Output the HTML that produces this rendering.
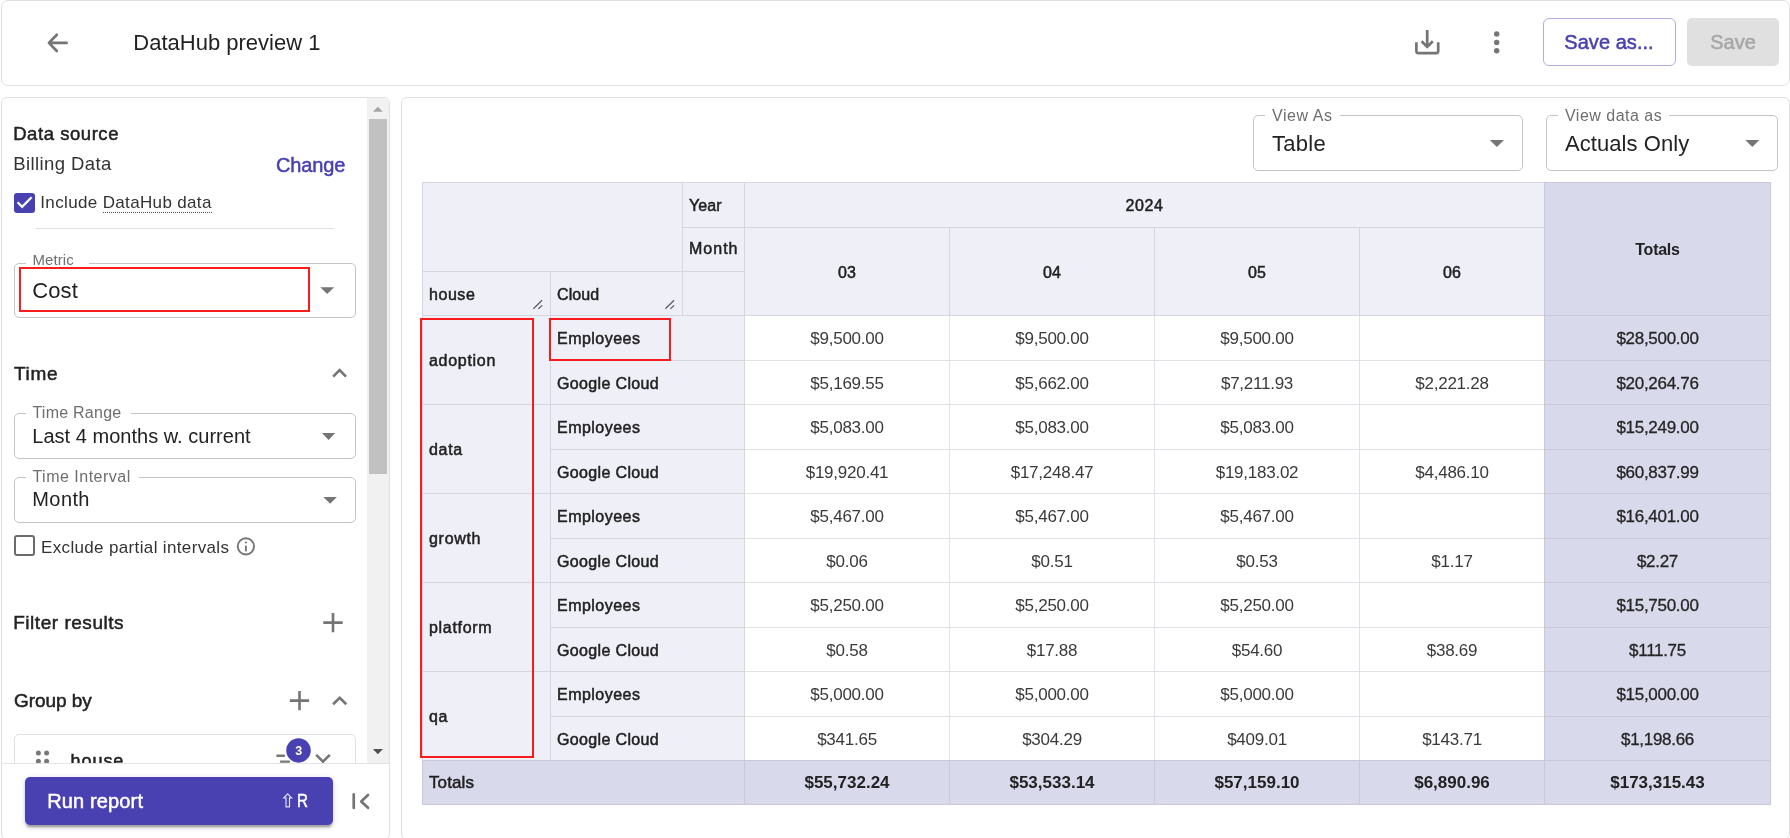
<!DOCTYPE html>
<html><head><meta charset="utf-8"><title>DataHub preview 1</title>
<style>
body{filter:grayscale(0.0001);}
html,body{margin:0;padding:0;background:#fff;width:1790px;height:838px;overflow:hidden;position:relative;font-family:"Liberation Sans",sans-serif;}
.t{position:absolute;white-space:nowrap;}
.r{position:absolute;}
.c{position:absolute;display:flex;align-items:center;white-space:nowrap;overflow:hidden;}
</style></head><body>
<div class="r" style="left:1px;top:0px;width:1789px;height:86px;border:1px solid #e0e0e0;border-radius:7px;box-sizing:border-box;"></div>
<div class="r" style="left:1px;top:97px;width:389px;height:743px;border:1px solid #e0e0e0;border-radius:6px;box-sizing:border-box;"></div>
<div class="r" style="left:401px;top:97px;width:1389px;height:743px;border:1px solid #e0e0e0;border-radius:6px;box-sizing:border-box;"></div>
<div class="t" style="left:133.3px;top:30.08px;font-size:22px;line-height:26px;color:#222;">DataHub preview 1</div>
<div class="r" style="left:1542.6px;top:18px;width:133.4px;height:48.4px;border:1.35px solid #b1addf;border-radius:6px;box-sizing:border-box;"></div>
<div class="t" style="left:1309px;width:600px;text-align:center;top:30.27px;font-size:20px;line-height:24px;color:#4940b2;-webkit-text-stroke:0.5px #4940b2;letter-spacing:0.05px;">Save as...</div>
<div class="r" style="left:1687px;top:18px;width:92px;height:48px;background:#e0e0e0;border-radius:5px;"></div>
<div class="t" style="left:1433px;width:600px;text-align:center;top:30.27px;font-size:20px;line-height:24px;color:#a6a6a6;-webkit-text-stroke:0.5px #a6a6a6;">Save</div>
<div class="t" style="left:13.2px;top:123.09px;font-size:18.5px;line-height:22px;color:#222;-webkit-text-stroke:0.5px #222;letter-spacing:0.55px;">Data source</div>
<div class="t" style="left:13.2px;top:153.09px;font-size:18.5px;line-height:22px;color:#333;letter-spacing:0.42px;">Billing Data</div>
<div class="t" style="left:10.5px;width:600px;text-align:center;top:153.27px;font-size:20px;line-height:24px;color:#4940b2;-webkit-text-stroke:0.5px #4940b2;letter-spacing:-0.14px;">Change</div>
<div class="r" style="left:14px;top:193px;width:21px;height:20px;background:#4940b2;border-radius:3px"></div>
<div class="t" style="left:40.3px;top:192.61px;font-size:17px;line-height:20px;color:#333;letter-spacing:0.35px;">Include <span style="border-bottom:1.5px dotted #555;padding-bottom:0px">DataHub data</span></div>
<div class="r" style="left:36px;top:228px;width:298px;height:1px;background:#e0e0e0"></div>
<div class="r" style="left:14px;top:263px;width:342px;height:55px;border:1px solid #c4c4c4;border-radius:5px;box-sizing:border-box;"></div>
<div class="r" style="left:26px;top:262px;width:63px;height:3px;background:#fff"></div>
<div class="t" style="left:32.4px;top:251.00px;font-size:15px;line-height:18px;color:#6e6e6e;letter-spacing:0.1px;">Metric</div>
<div class="t" style="left:32.3px;top:277.68px;font-size:22px;line-height:26px;color:#222;letter-spacing:0.1px;">Cost</div>
<div class="r" style="left:19px;top:267px;width:291px;height:45px;border:2px solid #f81c1c;box-sizing:border-box;"></div>
<div class="t" style="left:14px;top:362.02px;font-size:19px;line-height:23px;color:#222;-webkit-text-stroke:0.5px #222;letter-spacing:0.7px;">Time</div>
<div class="r" style="left:14px;top:413px;width:342px;height:46px;border:1px solid #c4c4c4;border-radius:5px;box-sizing:border-box;"></div>
<div class="r" style="left:26px;top:412px;width:105px;height:3px;background:#fff"></div>
<div class="t" style="left:32.4px;top:402.96px;font-size:16px;line-height:19px;color:#6e6e6e;letter-spacing:0.25px;">Time Range</div>
<div class="t" style="left:32.3px;top:423.67px;font-size:20px;line-height:24px;color:#222;letter-spacing:0.02px;">Last 4 months w. current</div>
<div class="r" style="left:14px;top:477px;width:342px;height:46px;border:1px solid #c4c4c4;border-radius:5px;box-sizing:border-box;"></div>
<div class="r" style="left:26px;top:476px;width:113px;height:3px;background:#fff"></div>
<div class="t" style="left:32.4px;top:466.66px;font-size:16px;line-height:19px;color:#6e6e6e;letter-spacing:0.5px;">Time Interval</div>
<div class="t" style="left:32.3px;top:487.07px;font-size:20px;line-height:24px;color:#222;letter-spacing:0.4px;">Month</div>
<div class="r" style="left:14px;top:535px;width:21px;height:21px;border:2px solid #6b6b6b;border-radius:3px;box-sizing:border-box;"></div>
<div class="t" style="left:41px;top:537.81px;font-size:17px;line-height:20px;color:#333;letter-spacing:0.35px;">Exclude partial intervals</div>
<div class="t" style="left:13.2px;top:610.92px;font-size:19px;line-height:23px;color:#222;-webkit-text-stroke:0.5px #222;letter-spacing:0.53px;">Filter results</div>
<div class="t" style="left:14px;top:689.42px;font-size:19px;line-height:23px;color:#222;-webkit-text-stroke:0.5px #222;letter-spacing:-0.07px;">Group by</div>
<div class="r" style="left:1px;top:98px;width:366px;height:665px;overflow:hidden">
<div class="r" style="left:13px;top:636px;width:342px;height:60px;border:1px solid #e0e0e0;border-radius:5px;box-sizing:border-box;"></div>
<div class="t" style="left:69.5px;top:651.76px;font-size:18px;line-height:22px;color:#222;-webkit-text-stroke:0.5px #222;letter-spacing:0.95px;">house</div>
</div>
<div class="r" style="left:367px;top:98px;width:22px;height:665px;background:#f1f1f1;border-top-right-radius:5px"></div>
<div class="r" style="left:369px;top:119px;width:18px;height:355px;background:#c1c1c1"></div>
<div class="r" style="left:2px;top:763px;width:387px;height:1px;background:#e3e3e3"></div>
<div class="r" style="left:25px;top:777px;width:308px;height:48px;background:#4940b2;border-radius:5px;box-shadow:0 4px 1.5px -2.7px rgba(0,0,0,.2),0 2.7px 2.7px 0 rgba(0,0,0,.14),0 1.35px 6.75px 0 rgba(0,0,0,.12)"></div>
<div class="t" style="left:47.2px;top:789.17px;font-size:20px;line-height:24px;color:#fff;-webkit-text-stroke:0.5px #fff;letter-spacing:0.14px;">Run report</div>
<div class="t" style="left:296.8px;top:789.22px;font-size:19px;line-height:23px;color:#fff;-webkit-text-stroke:0.5px #fff;transform:scaleX(0.8);transform-origin:0 0;">R</div>
<div class="r" style="left:1253px;top:115px;width:270px;height:56px;border:1px solid #c4c4c4;border-radius:5px;box-sizing:border-box;"></div>
<div class="r" style="left:1265px;top:113px;width:75px;height:4px;background:#fff"></div>
<div class="t" style="left:1272px;top:105.96px;font-size:16px;line-height:19px;color:#6e6e6e;letter-spacing:0.58px;">View As</div>
<div class="t" style="left:1272px;top:130.58px;font-size:22px;line-height:26px;color:#222;letter-spacing:0.3px;">Table</div>
<div class="r" style="left:1546px;top:115px;width:232px;height:56px;border:1px solid #c4c4c4;border-radius:5px;box-sizing:border-box;"></div>
<div class="r" style="left:1558px;top:113px;width:111px;height:4px;background:#fff"></div>
<div class="t" style="left:1565px;top:105.96px;font-size:16px;line-height:19px;color:#6e6e6e;letter-spacing:0.49px;">View data as</div>
<div class="t" style="left:1565px;top:130.58px;font-size:22px;line-height:26px;color:#222;letter-spacing:0.07px;">Actuals Only</div>
<div class="r" style="left:422px;top:182px;width:1349px;height:623px;background:#d6d6e0"></div>
<div class="r" style="left:745px;top:316px;width:799px;height:444px;background:#e1e1e7"></div>
<div class="r" style="left:1544px;top:182px;width:227px;height:623px;background:#c9c8dc"></div>
<div class="r" style="left:422px;top:760px;width:1349px;height:45px;background:#c9c8dc"></div>
<div class="c" style="left:423px;top:183px;width:259px;height:88px;background:#efeff8;justify-content:center;padding-top:2px;box-sizing:border-box;"><span style="font-size:17px;color:#333;"></span></div>
<div class="c" style="left:683px;top:183px;width:61px;height:44px;background:#efeff8;padding-left:6px;padding-top:2px;box-sizing:border-box;"><span style="font-size:16px;color:#222;-webkit-text-stroke:0.5px #222;letter-spacing:0.1px;">Year</span></div>
<div class="c" style="left:745px;top:183px;width:799px;height:44px;background:#efeff8;justify-content:center;padding-top:2px;box-sizing:border-box;"><span style="font-size:16px;color:#222;-webkit-text-stroke:0.5px #222;letter-spacing:0.6px;">2024</span></div>
<div class="c" style="left:1545px;top:183px;width:225px;height:132px;background:#d9d9ec;justify-content:center;padding-top:2px;box-sizing:border-box;"><span style="font-size:16px;color:#222;font-weight:700;letter-spacing:-0.25px;">Totals</span></div>
<div class="c" style="left:683px;top:228px;width:61px;height:43px;background:#efeff8;padding-left:6px;padding-top:2px;box-sizing:border-box;padding-top:0px;padding-bottom:2px;"><span style="font-size:16px;color:#222;-webkit-text-stroke:0.5px #222;letter-spacing:1.0px;">Month</span></div>
<div class="c" style="left:745px;top:228px;width:204px;height:87px;background:#efeff8;justify-content:center;padding-top:2px;box-sizing:border-box;"><span style="font-size:16px;color:#222;-webkit-text-stroke:0.5px #222;letter-spacing:0.1px;">03</span></div>
<div class="c" style="left:950px;top:228px;width:204px;height:87px;background:#efeff8;justify-content:center;padding-top:2px;box-sizing:border-box;"><span style="font-size:16px;color:#222;-webkit-text-stroke:0.5px #222;letter-spacing:0.1px;">04</span></div>
<div class="c" style="left:1155px;top:228px;width:204px;height:87px;background:#efeff8;justify-content:center;padding-top:2px;box-sizing:border-box;"><span style="font-size:16px;color:#222;-webkit-text-stroke:0.5px #222;letter-spacing:0.1px;">05</span></div>
<div class="c" style="left:1360px;top:228px;width:184px;height:87px;background:#efeff8;justify-content:center;padding-top:2px;box-sizing:border-box;"><span style="font-size:16px;color:#222;-webkit-text-stroke:0.5px #222;letter-spacing:0.1px;">06</span></div>
<div class="c" style="left:423px;top:272px;width:127px;height:43px;background:#efeff8;padding-left:6px;padding-top:2px;box-sizing:border-box;"><span style="font-size:16px;color:#222;-webkit-text-stroke:0.5px #222;letter-spacing:0.55px;">house</span></div>
<div class="c" style="left:551px;top:272px;width:131px;height:43px;background:#efeff8;padding-left:6px;padding-top:2px;box-sizing:border-box;"><span style="font-size:16px;color:#222;-webkit-text-stroke:0.5px #222;letter-spacing:0.1px;">Cloud</span></div>
<div class="c" style="left:683px;top:272px;width:61px;height:43px;background:#efeff8;justify-content:center;padding-top:2px;box-sizing:border-box;"><span style="font-size:17px;color:#333;"></span></div>
<div class="c" style="left:423px;top:316px;width:127px;height:88px;background:#efeff8;padding-left:6px;padding-top:2px;box-sizing:border-box;"><span style="font-size:16px;color:#222;-webkit-text-stroke:0.5px #222;letter-spacing:0.7px;">adoption</span></div>
<div class="c" style="left:423px;top:405px;width:127px;height:88px;background:#efeff8;padding-left:6px;padding-top:2px;box-sizing:border-box;"><span style="font-size:16px;color:#222;-webkit-text-stroke:0.5px #222;letter-spacing:0.7px;">data</span></div>
<div class="c" style="left:423px;top:494px;width:127px;height:88px;background:#efeff8;padding-left:6px;padding-top:2px;box-sizing:border-box;"><span style="font-size:16px;color:#222;-webkit-text-stroke:0.5px #222;letter-spacing:0.7px;">growth</span></div>
<div class="c" style="left:423px;top:583px;width:127px;height:88px;background:#efeff8;padding-left:6px;padding-top:2px;box-sizing:border-box;"><span style="font-size:16px;color:#222;-webkit-text-stroke:0.5px #222;letter-spacing:0.7px;">platform</span></div>
<div class="c" style="left:423px;top:672px;width:127px;height:88px;background:#efeff8;padding-left:6px;padding-top:2px;box-sizing:border-box;"><span style="font-size:16px;color:#222;-webkit-text-stroke:0.5px #222;letter-spacing:0.7px;">qa</span></div>
<div class="c" style="left:551px;top:316px;width:193px;height:44px;background:#efeff8;padding-left:6px;padding-top:2px;box-sizing:border-box;"><span style="font-size:16px;color:#222;-webkit-text-stroke:0.5px #222;letter-spacing:0.48px;">Employees</span></div>
<div class="c" style="left:745px;top:316px;width:204px;height:44px;background:#fff;justify-content:center;padding-top:2px;box-sizing:border-box;"><span style="font-size:17px;color:#3a3a3a;letter-spacing:-0.25px;">$9,500.00</span></div>
<div class="c" style="left:950px;top:316px;width:204px;height:44px;background:#fff;justify-content:center;padding-top:2px;box-sizing:border-box;"><span style="font-size:17px;color:#3a3a3a;letter-spacing:-0.25px;">$9,500.00</span></div>
<div class="c" style="left:1155px;top:316px;width:204px;height:44px;background:#fff;justify-content:center;padding-top:2px;box-sizing:border-box;"><span style="font-size:17px;color:#3a3a3a;letter-spacing:-0.25px;">$9,500.00</span></div>
<div class="c" style="left:1360px;top:316px;width:184px;height:44px;background:#fff;justify-content:center;padding-top:2px;box-sizing:border-box;"><span style="font-size:17px;color:#3a3a3a;letter-spacing:-0.25px;"></span></div>
<div class="c" style="left:1545px;top:316px;width:225px;height:44px;background:#d9d9ec;justify-content:center;padding-top:2px;box-sizing:border-box;"><span style="font-size:17px;color:#262626;-webkit-text-stroke:0.3px #262626;letter-spacing:-0.3px;">$28,500.00</span></div>
<div class="c" style="left:551px;top:361px;width:193px;height:43px;background:#efeff8;padding-left:6px;padding-top:2px;box-sizing:border-box;"><span style="font-size:16px;color:#222;-webkit-text-stroke:0.5px #222;letter-spacing:0.35px;">Google Cloud</span></div>
<div class="c" style="left:745px;top:361px;width:204px;height:43px;background:#fff;justify-content:center;padding-top:2px;box-sizing:border-box;"><span style="font-size:17px;color:#3a3a3a;letter-spacing:-0.25px;">$5,169.55</span></div>
<div class="c" style="left:950px;top:361px;width:204px;height:43px;background:#fff;justify-content:center;padding-top:2px;box-sizing:border-box;"><span style="font-size:17px;color:#3a3a3a;letter-spacing:-0.25px;">$5,662.00</span></div>
<div class="c" style="left:1155px;top:361px;width:204px;height:43px;background:#fff;justify-content:center;padding-top:2px;box-sizing:border-box;"><span style="font-size:17px;color:#3a3a3a;letter-spacing:-0.25px;">$7,211.93</span></div>
<div class="c" style="left:1360px;top:361px;width:184px;height:43px;background:#fff;justify-content:center;padding-top:2px;box-sizing:border-box;"><span style="font-size:17px;color:#3a3a3a;letter-spacing:-0.25px;">$2,221.28</span></div>
<div class="c" style="left:1545px;top:361px;width:225px;height:43px;background:#d9d9ec;justify-content:center;padding-top:2px;box-sizing:border-box;"><span style="font-size:17px;color:#262626;-webkit-text-stroke:0.3px #262626;letter-spacing:-0.3px;">$20,264.76</span></div>
<div class="c" style="left:551px;top:405px;width:193px;height:44px;background:#efeff8;padding-left:6px;padding-top:2px;box-sizing:border-box;"><span style="font-size:16px;color:#222;-webkit-text-stroke:0.5px #222;letter-spacing:0.48px;">Employees</span></div>
<div class="c" style="left:745px;top:405px;width:204px;height:44px;background:#fff;justify-content:center;padding-top:2px;box-sizing:border-box;"><span style="font-size:17px;color:#3a3a3a;letter-spacing:-0.25px;">$5,083.00</span></div>
<div class="c" style="left:950px;top:405px;width:204px;height:44px;background:#fff;justify-content:center;padding-top:2px;box-sizing:border-box;"><span style="font-size:17px;color:#3a3a3a;letter-spacing:-0.25px;">$5,083.00</span></div>
<div class="c" style="left:1155px;top:405px;width:204px;height:44px;background:#fff;justify-content:center;padding-top:2px;box-sizing:border-box;"><span style="font-size:17px;color:#3a3a3a;letter-spacing:-0.25px;">$5,083.00</span></div>
<div class="c" style="left:1360px;top:405px;width:184px;height:44px;background:#fff;justify-content:center;padding-top:2px;box-sizing:border-box;"><span style="font-size:17px;color:#3a3a3a;letter-spacing:-0.25px;"></span></div>
<div class="c" style="left:1545px;top:405px;width:225px;height:44px;background:#d9d9ec;justify-content:center;padding-top:2px;box-sizing:border-box;"><span style="font-size:17px;color:#262626;-webkit-text-stroke:0.3px #262626;letter-spacing:-0.3px;">$15,249.00</span></div>
<div class="c" style="left:551px;top:450px;width:193px;height:43px;background:#efeff8;padding-left:6px;padding-top:2px;box-sizing:border-box;"><span style="font-size:16px;color:#222;-webkit-text-stroke:0.5px #222;letter-spacing:0.35px;">Google Cloud</span></div>
<div class="c" style="left:745px;top:450px;width:204px;height:43px;background:#fff;justify-content:center;padding-top:2px;box-sizing:border-box;"><span style="font-size:17px;color:#3a3a3a;letter-spacing:-0.25px;">$19,920.41</span></div>
<div class="c" style="left:950px;top:450px;width:204px;height:43px;background:#fff;justify-content:center;padding-top:2px;box-sizing:border-box;"><span style="font-size:17px;color:#3a3a3a;letter-spacing:-0.25px;">$17,248.47</span></div>
<div class="c" style="left:1155px;top:450px;width:204px;height:43px;background:#fff;justify-content:center;padding-top:2px;box-sizing:border-box;"><span style="font-size:17px;color:#3a3a3a;letter-spacing:-0.25px;">$19,183.02</span></div>
<div class="c" style="left:1360px;top:450px;width:184px;height:43px;background:#fff;justify-content:center;padding-top:2px;box-sizing:border-box;"><span style="font-size:17px;color:#3a3a3a;letter-spacing:-0.25px;">$4,486.10</span></div>
<div class="c" style="left:1545px;top:450px;width:225px;height:43px;background:#d9d9ec;justify-content:center;padding-top:2px;box-sizing:border-box;"><span style="font-size:17px;color:#262626;-webkit-text-stroke:0.3px #262626;letter-spacing:-0.3px;">$60,837.99</span></div>
<div class="c" style="left:551px;top:494px;width:193px;height:44px;background:#efeff8;padding-left:6px;padding-top:2px;box-sizing:border-box;"><span style="font-size:16px;color:#222;-webkit-text-stroke:0.5px #222;letter-spacing:0.48px;">Employees</span></div>
<div class="c" style="left:745px;top:494px;width:204px;height:44px;background:#fff;justify-content:center;padding-top:2px;box-sizing:border-box;"><span style="font-size:17px;color:#3a3a3a;letter-spacing:-0.25px;">$5,467.00</span></div>
<div class="c" style="left:950px;top:494px;width:204px;height:44px;background:#fff;justify-content:center;padding-top:2px;box-sizing:border-box;"><span style="font-size:17px;color:#3a3a3a;letter-spacing:-0.25px;">$5,467.00</span></div>
<div class="c" style="left:1155px;top:494px;width:204px;height:44px;background:#fff;justify-content:center;padding-top:2px;box-sizing:border-box;"><span style="font-size:17px;color:#3a3a3a;letter-spacing:-0.25px;">$5,467.00</span></div>
<div class="c" style="left:1360px;top:494px;width:184px;height:44px;background:#fff;justify-content:center;padding-top:2px;box-sizing:border-box;"><span style="font-size:17px;color:#3a3a3a;letter-spacing:-0.25px;"></span></div>
<div class="c" style="left:1545px;top:494px;width:225px;height:44px;background:#d9d9ec;justify-content:center;padding-top:2px;box-sizing:border-box;"><span style="font-size:17px;color:#262626;-webkit-text-stroke:0.3px #262626;letter-spacing:-0.3px;">$16,401.00</span></div>
<div class="c" style="left:551px;top:539px;width:193px;height:43px;background:#efeff8;padding-left:6px;padding-top:2px;box-sizing:border-box;"><span style="font-size:16px;color:#222;-webkit-text-stroke:0.5px #222;letter-spacing:0.35px;">Google Cloud</span></div>
<div class="c" style="left:745px;top:539px;width:204px;height:43px;background:#fff;justify-content:center;padding-top:2px;box-sizing:border-box;"><span style="font-size:17px;color:#3a3a3a;letter-spacing:-0.25px;">$0.06</span></div>
<div class="c" style="left:950px;top:539px;width:204px;height:43px;background:#fff;justify-content:center;padding-top:2px;box-sizing:border-box;"><span style="font-size:17px;color:#3a3a3a;letter-spacing:-0.25px;">$0.51</span></div>
<div class="c" style="left:1155px;top:539px;width:204px;height:43px;background:#fff;justify-content:center;padding-top:2px;box-sizing:border-box;"><span style="font-size:17px;color:#3a3a3a;letter-spacing:-0.25px;">$0.53</span></div>
<div class="c" style="left:1360px;top:539px;width:184px;height:43px;background:#fff;justify-content:center;padding-top:2px;box-sizing:border-box;"><span style="font-size:17px;color:#3a3a3a;letter-spacing:-0.25px;">$1.17</span></div>
<div class="c" style="left:1545px;top:539px;width:225px;height:43px;background:#d9d9ec;justify-content:center;padding-top:2px;box-sizing:border-box;"><span style="font-size:17px;color:#262626;-webkit-text-stroke:0.3px #262626;letter-spacing:-0.3px;">$2.27</span></div>
<div class="c" style="left:551px;top:583px;width:193px;height:44px;background:#efeff8;padding-left:6px;padding-top:2px;box-sizing:border-box;"><span style="font-size:16px;color:#222;-webkit-text-stroke:0.5px #222;letter-spacing:0.48px;">Employees</span></div>
<div class="c" style="left:745px;top:583px;width:204px;height:44px;background:#fff;justify-content:center;padding-top:2px;box-sizing:border-box;"><span style="font-size:17px;color:#3a3a3a;letter-spacing:-0.25px;">$5,250.00</span></div>
<div class="c" style="left:950px;top:583px;width:204px;height:44px;background:#fff;justify-content:center;padding-top:2px;box-sizing:border-box;"><span style="font-size:17px;color:#3a3a3a;letter-spacing:-0.25px;">$5,250.00</span></div>
<div class="c" style="left:1155px;top:583px;width:204px;height:44px;background:#fff;justify-content:center;padding-top:2px;box-sizing:border-box;"><span style="font-size:17px;color:#3a3a3a;letter-spacing:-0.25px;">$5,250.00</span></div>
<div class="c" style="left:1360px;top:583px;width:184px;height:44px;background:#fff;justify-content:center;padding-top:2px;box-sizing:border-box;"><span style="font-size:17px;color:#3a3a3a;letter-spacing:-0.25px;"></span></div>
<div class="c" style="left:1545px;top:583px;width:225px;height:44px;background:#d9d9ec;justify-content:center;padding-top:2px;box-sizing:border-box;"><span style="font-size:17px;color:#262626;-webkit-text-stroke:0.3px #262626;letter-spacing:-0.3px;">$15,750.00</span></div>
<div class="c" style="left:551px;top:628px;width:193px;height:43px;background:#efeff8;padding-left:6px;padding-top:2px;box-sizing:border-box;"><span style="font-size:16px;color:#222;-webkit-text-stroke:0.5px #222;letter-spacing:0.35px;">Google Cloud</span></div>
<div class="c" style="left:745px;top:628px;width:204px;height:43px;background:#fff;justify-content:center;padding-top:2px;box-sizing:border-box;"><span style="font-size:17px;color:#3a3a3a;letter-spacing:-0.25px;">$0.58</span></div>
<div class="c" style="left:950px;top:628px;width:204px;height:43px;background:#fff;justify-content:center;padding-top:2px;box-sizing:border-box;"><span style="font-size:17px;color:#3a3a3a;letter-spacing:-0.25px;">$17.88</span></div>
<div class="c" style="left:1155px;top:628px;width:204px;height:43px;background:#fff;justify-content:center;padding-top:2px;box-sizing:border-box;"><span style="font-size:17px;color:#3a3a3a;letter-spacing:-0.25px;">$54.60</span></div>
<div class="c" style="left:1360px;top:628px;width:184px;height:43px;background:#fff;justify-content:center;padding-top:2px;box-sizing:border-box;"><span style="font-size:17px;color:#3a3a3a;letter-spacing:-0.25px;">$38.69</span></div>
<div class="c" style="left:1545px;top:628px;width:225px;height:43px;background:#d9d9ec;justify-content:center;padding-top:2px;box-sizing:border-box;"><span style="font-size:17px;color:#262626;-webkit-text-stroke:0.3px #262626;letter-spacing:-0.3px;">$111.75</span></div>
<div class="c" style="left:551px;top:672px;width:193px;height:44px;background:#efeff8;padding-left:6px;padding-top:2px;box-sizing:border-box;"><span style="font-size:16px;color:#222;-webkit-text-stroke:0.5px #222;letter-spacing:0.48px;">Employees</span></div>
<div class="c" style="left:745px;top:672px;width:204px;height:44px;background:#fff;justify-content:center;padding-top:2px;box-sizing:border-box;"><span style="font-size:17px;color:#3a3a3a;letter-spacing:-0.25px;">$5,000.00</span></div>
<div class="c" style="left:950px;top:672px;width:204px;height:44px;background:#fff;justify-content:center;padding-top:2px;box-sizing:border-box;"><span style="font-size:17px;color:#3a3a3a;letter-spacing:-0.25px;">$5,000.00</span></div>
<div class="c" style="left:1155px;top:672px;width:204px;height:44px;background:#fff;justify-content:center;padding-top:2px;box-sizing:border-box;"><span style="font-size:17px;color:#3a3a3a;letter-spacing:-0.25px;">$5,000.00</span></div>
<div class="c" style="left:1360px;top:672px;width:184px;height:44px;background:#fff;justify-content:center;padding-top:2px;box-sizing:border-box;"><span style="font-size:17px;color:#3a3a3a;letter-spacing:-0.25px;"></span></div>
<div class="c" style="left:1545px;top:672px;width:225px;height:44px;background:#d9d9ec;justify-content:center;padding-top:2px;box-sizing:border-box;"><span style="font-size:17px;color:#262626;-webkit-text-stroke:0.3px #262626;letter-spacing:-0.3px;">$15,000.00</span></div>
<div class="c" style="left:551px;top:717px;width:193px;height:43px;background:#efeff8;padding-left:6px;padding-top:2px;box-sizing:border-box;"><span style="font-size:16px;color:#222;-webkit-text-stroke:0.5px #222;letter-spacing:0.35px;">Google Cloud</span></div>
<div class="c" style="left:745px;top:717px;width:204px;height:43px;background:#fff;justify-content:center;padding-top:2px;box-sizing:border-box;"><span style="font-size:17px;color:#3a3a3a;letter-spacing:-0.25px;">$341.65</span></div>
<div class="c" style="left:950px;top:717px;width:204px;height:43px;background:#fff;justify-content:center;padding-top:2px;box-sizing:border-box;"><span style="font-size:17px;color:#3a3a3a;letter-spacing:-0.25px;">$304.29</span></div>
<div class="c" style="left:1155px;top:717px;width:204px;height:43px;background:#fff;justify-content:center;padding-top:2px;box-sizing:border-box;"><span style="font-size:17px;color:#3a3a3a;letter-spacing:-0.25px;">$409.01</span></div>
<div class="c" style="left:1360px;top:717px;width:184px;height:43px;background:#fff;justify-content:center;padding-top:2px;box-sizing:border-box;"><span style="font-size:17px;color:#3a3a3a;letter-spacing:-0.25px;">$143.71</span></div>
<div class="c" style="left:1545px;top:717px;width:225px;height:43px;background:#d9d9ec;justify-content:center;padding-top:2px;box-sizing:border-box;"><span style="font-size:17px;color:#262626;-webkit-text-stroke:0.3px #262626;letter-spacing:-0.3px;">$1,198.66</span></div>
<div class="c" style="left:423px;top:761px;width:321px;height:43px;background:#d9d9ec;padding-left:6px;padding-top:2px;box-sizing:border-box;padding-top:0px;"><span style="font-size:17px;color:#222;-webkit-text-stroke:0.5px #222;letter-spacing:0.1px;">Totals</span></div>
<div class="c" style="left:745px;top:761px;width:204px;height:43px;background:#d9d9ec;justify-content:center;padding-top:2px;box-sizing:border-box;padding-top:0px;"><span style="font-size:17px;color:#222;font-weight:700;">$55,732.24</span></div>
<div class="c" style="left:950px;top:761px;width:204px;height:43px;background:#d9d9ec;justify-content:center;padding-top:2px;box-sizing:border-box;padding-top:0px;"><span style="font-size:17px;color:#222;font-weight:700;">$53,533.14</span></div>
<div class="c" style="left:1155px;top:761px;width:204px;height:43px;background:#d9d9ec;justify-content:center;padding-top:2px;box-sizing:border-box;padding-top:0px;"><span style="font-size:17px;color:#222;font-weight:700;">$57,159.10</span></div>
<div class="c" style="left:1360px;top:761px;width:184px;height:43px;background:#d9d9ec;justify-content:center;padding-top:2px;box-sizing:border-box;padding-top:0px;"><span style="font-size:17px;color:#222;font-weight:700;">$6,890.96</span></div>
<div class="c" style="left:1545px;top:761px;width:225px;height:43px;background:#d9d9ec;justify-content:center;padding-top:2px;box-sizing:border-box;padding-top:0px;"><span style="font-size:17px;color:#222;font-weight:700;">$173,315.43</span></div>
<div class="r" style="left:420px;top:318px;width:114px;height:440px;border:2px solid #f81c1c;box-sizing:border-box;"></div>
<div class="r" style="left:549px;top:318px;width:122px;height:43px;border:2px solid #f81c1c;box-sizing:border-box;"></div>
<svg class="r" style="left:0;top:0;pointer-events:none" width="1790" height="838" viewBox="0 0 1790 838"><path d="M56.8 34.8L48.9 42.9L56.8 51M49.2 42.9H66.6" fill="none" stroke="#757575" stroke-width="2.7" stroke-linecap="round" stroke-linejoin="round"/><path d="M1427.2 29.9V46.3M1421.6 41.3L1427.2 46.9L1432.8 41.3M1416.4 42.2V51Q1416.4 53.2 1418.6 53.2H1436Q1438.2 53.2 1438.2 51V42.2" fill="none" stroke="#757575" stroke-width="2.7"/><circle cx="1496.7" cy="34" r="2.7" fill="#757575"/><circle cx="1496.7" cy="42.4" r="2.7" fill="#757575"/><circle cx="1496.7" cy="50.7" r="2.7" fill="#757575"/><path d="M17.6 202.3L22.1 206.8L31.6 197.3" fill="none" stroke="#fff" stroke-width="2.3"/><path d="M320.30 287.2L334.10 287.2L327.20 293.9Z" fill="#757575"/><path d="M322.00 433.1L335.20 433.1L328.60 439.9Z" fill="#757575"/><path d="M323.35 497.0L336.85 497.0L330.10 503.8Z" fill="#757575"/><path d="M1489.75 139.9L1504.05 139.9L1496.90 147.0Z" fill="#757575"/><path d="M1745.30 140.0L1759.30 140.0L1752.30 147.0Z" fill="#757575"/><path d="M333.2 376.6L339.6 370.1L346.0 376.6" fill="none" stroke="#757575" stroke-width="2.6"/><path d="M333.1 704.3L339.7 697.8L346.3 704.3" fill="none" stroke="#757575" stroke-width="2.6"/><path d="M333 613V632.3M323.3 622.6H342.7" fill="none" stroke="#757575" stroke-width="2.6"/><path d="M299.5 691V710.2M289.8 700.6H309.1" fill="none" stroke="#757575" stroke-width="2.6"/><circle cx="245.9" cy="546.4" r="8.1" fill="none" stroke="#757575" stroke-width="1.9"/><path d="M245.9 545.6V551.4" fill="none" stroke="#757575" stroke-width="1.9"/><circle cx="245.9" cy="542.5" r="1.1" fill="#757575"/><path d="M372.90 111.8L382.90 111.8L377.90 106.8Z" fill="#a3a3a3"/><path d="M372.90 749.0L382.90 749.0L377.90 754.2Z" fill="#505050"/><path d="M287.7 793.9L291.6 797.8H289.5V806.9H286V797.8H283.8Z" fill="none" stroke="#e2e0f4" stroke-width="1.15" stroke-linejoin="miter"/><path d="M353.75 794.4V808M368 795L361.2 801.4L368 807.8" fill="none" stroke="#757575" stroke-width="2.7" stroke-linecap="round" stroke-linejoin="round"/><path d="M533.4 308.7L542.1 300.3M538.4 308.7L542.2 305.4" fill="none" stroke="#5c5c5c" stroke-width="1.2"/><path d="M665.4 308.7L674.1 300.3M670.4 308.7L674.2 305.4" fill="none" stroke="#5c5c5c" stroke-width="1.2"/><defs><clipPath id="cg"><rect x="0" y="98" width="366" height="665"/></clipPath></defs><g clip-path="url(#cg)"><circle cx="38.4" cy="753.1" r="2.5" fill="#777"/><circle cx="38.4" cy="761.2" r="2.5" fill="#777"/><circle cx="46.6" cy="753.1" r="2.5" fill="#777"/><circle cx="46.6" cy="761.2" r="2.5" fill="#777"/><path d="M277.4 755.8H284M281 761.6H289" fill="none" stroke="#777" stroke-width="2.4" stroke-linecap="round"/><path d="M316.2 754.8L323 761.6L329.8 754.8" fill="none" stroke="#757575" stroke-width="2.6"/><circle cx="298.5" cy="750.4" r="12.25" fill="#4940b2"/><text x="298.7" y="754.5" text-anchor="middle" font-family="Liberation Sans" font-weight="700" font-size="12.5" fill="#fff">3</text></g></svg>
</body></html>
